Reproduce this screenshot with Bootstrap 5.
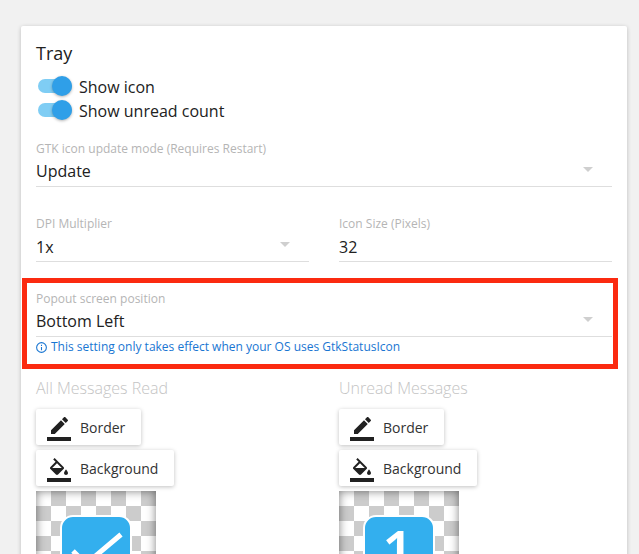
<!DOCTYPE html>
<html lang="en">
<head>
<meta charset="utf-8">
<title>Tray</title>
<link href="https://cdn.jsdelivr.net/npm/bootstrap@5.3.0/dist/css/bootstrap.min.css" rel="stylesheet">
<style>
html,body{height:554px;overflow:hidden}
body{background:#f1f1f1;font-family:"Open Sans","Noto Sans",sans-serif;color:#212121;font-size:16px}
.sheet{margin:26px 12px 0 21px;height:600px;background:#fff;border-radius:2px;box-shadow:0 1px 4px rgba(0,0,0,.22);padding:15px 15px 0}
.sheet-title{font-size:18px;font-weight:400;line-height:24px;margin:0 0 9px}
.tgl-row{height:24px;gap:7px;line-height:24px}
.tgl-text{padding-top:1px}
.tgl{width:34px;height:14px;border-radius:7px;background:#7fcdf4;position:relative;margin-left:2px}
.tgl::after{content:"";position:absolute;right:0;top:-3px;width:20px;height:20px;border-radius:50%;background:#2f9fe8;box-shadow:0 1px 3px rgba(0,0,0,.3)}
.fld{position:relative;height:47px}
.fld-label{font-size:12px;line-height:16px;color:#b5b5b5;display:block;padding-top:1px;height:16px;box-sizing:content-box;margin-bottom:-1px}
.fld-value{font-size:16px;line-height:26px;height:31px;padding-top:2px;border-bottom:1px solid #dedede;display:block}
.fld-value.low{padding-top:3px}
.caret{position:absolute;right:19px;top:27px;width:0;height:0;border-left:5px solid transparent;border-right:5px solid transparent;border-top:5px solid #cfcfcf}
.gap-first{margin-top:18px}
.gap-a{margin-top:28px}
.gap-b{margin-top:22px}
.two{display:grid;grid-template-columns:273px 273px;column-gap:30px}
.flagged{position:relative}
.flagged::after{content:"";position:absolute;left:-14px;right:-6px;top:-12px;height:91px;border:5px solid #fb2a10;pointer-events:none}
.hint{font-size:12px;line-height:16px;color:#1976d2;margin-top:2px;height:16px;gap:3px}
.hint svg{margin-left:-1px}
.hint-ic{width:13px;height:13px}
.sub-head{font-size:16px;font-weight:300;line-height:22px;color:#c4c4c4;margin-bottom:10px}
.tool-btn{height:36px;background:#fff;border:0;border-radius:2px;box-shadow:0 1px 4px rgba(0,0,0,.25);font-size:14px;color:#333;padding:0 16px 0 11px;gap:9px;margin-bottom:5px;width:max-content}
.swatch-ic{width:24px;height:24px;display:block;margin-top:4px}
.checker{width:120px;height:120px;position:relative;background:repeating-conic-gradient(#ccc 0 25%,#fff 0 50%) 0 0/30px 30px;box-shadow:inset 0 0 10px rgba(0,0,0,.5)}
.tile{position:absolute;left:24px;top:24px;width:72px;height:72px;background:#33afee;border:2px solid #fff;border-radius:13px;box-sizing:border-box;color:#fff;overflow:hidden}
.tile-num{font-size:56px;font-weight:600;line-height:60px;text-align:center;display:block;padding-top:2px;margin-left:-2px}
.tile svg{display:block}
</style>
</head>
<body>
<div class="sheet">
  <h2 class="sheet-title">Tray</h2>
  <div class="d-flex align-items-center tgl-row"><span class="tgl"></span><span class="tgl-text">Show icon</span></div>
  <div class="d-flex align-items-center tgl-row"><span class="tgl"></span><span class="tgl-text">Show unread count</span></div>

  <div class="fld gap-first">
    <span class="fld-label">GTK icon update mode (Requires Restart)</span>
    <span class="fld-value">Update</span>
    <span class="caret"></span>
  </div>

  <div class="two gap-a">
    <div class="fld"><span class="fld-label">DPI Multiplier</span><span class="fld-value low">1x</span><span class="caret"></span></div>
    <div class="fld"><span class="fld-label">Icon Size (Pixels)</span><span class="fld-value low">32</span></div>
  </div>

  <div class="flagged gap-a">
    <div class="fld">
      <span class="fld-label">Popout screen position</span>
      <span class="fld-value">Bottom Left</span>
      <span class="caret"></span>
    </div>
    <div class="hint d-flex align-items-center">
      <svg class="hint-ic" viewBox="0 0 24 24" fill="#1976d2" aria-hidden="true"><path d="M11 7h2v2h-2zm0 4h2v6h-2zm1-9a10 10 0 1 0 0 20 10 10 0 0 0 0-20zm0 18a8 8 0 1 1 0-16 8 8 0 0 1 0 16z"/></svg>
      <span>This setting only takes effect when your OS uses GtkStatusIcon</span>
    </div>
  </div>

  <div class="two gap-b">
    <div>
      <div class="sub-head">All Messages Read</div>
      <button class="tool-btn d-flex align-items-center"><svg class="swatch-ic" viewBox="0 0 24 24"><path fill="#212121" d="M17.750 7 14 3.250l-10 10V17h3.750l10-10zm2.960-2.960c.39-.39.39-1.020 0-1.410L18.370.29c-.39-.39-1.020-.39-1.410 0L15 2.250 18.750 6l1.960-1.960z"/><path fill="#212121" d="M0 20h24v4H0z"/></svg><span>Border</span></button>
      <button class="tool-btn d-flex align-items-center"><svg class="swatch-ic" viewBox="0 0 24 24"><path fill="#212121" d="M16.560 8.940 7.620 0 6.210 1.410l2.380 2.380-5.150 5.150c-.59.59-.59 1.540 0 2.120l5.500 5.500c.29.29.68.44 1.060.44s.77-.15 1.060-.44l5.500-5.500c.59-.58.59-1.530 0-2.120zM5.210 10 10 5.210 14.790 10H5.210zM19 11.500s-2 2.170-2 3.500c0 1.100.9 2 2 2s2-.9 2-2c0-1.330-2-3.500-2-3.500z"/><path fill="#212121" d="M0 20h24v4H0z"/></svg><span>Background</span></button>
      <div class="checker"><div class="tile"><svg width="68" height="68" viewBox="0 0 68 68"><path d="M11 34 24 47 59 17.500" fill="none" stroke="#fff" stroke-width="5"/></svg></div></div>
    </div>
    <div>
      <div class="sub-head">Unread Messages</div>
      <button class="tool-btn d-flex align-items-center"><svg class="swatch-ic" viewBox="0 0 24 24"><path fill="#212121" d="M17.750 7 14 3.250l-10 10V17h3.750l10-10zm2.960-2.960c.39-.39.39-1.020 0-1.410L18.370.29c-.39-.39-1.020-.39-1.410 0L15 2.250 18.750 6l1.960-1.960z"/><path fill="#212121" d="M0 20h24v4H0z"/></svg><span>Border</span></button>
      <button class="tool-btn d-flex align-items-center"><svg class="swatch-ic" viewBox="0 0 24 24"><path fill="#212121" d="M16.560 8.940 7.620 0 6.210 1.410l2.380 2.380-5.150 5.150c-.59.59-.59 1.540 0 2.120l5.500 5.500c.29.29.68.44 1.060.44s.77-.15 1.060-.44l5.500-5.500c.59-.58.59-1.530 0-2.120zM5.210 10 10 5.210 14.790 10H5.210zM19 11.500s-2 2.170-2 3.500c0 1.100.9 2 2 2s2-.9 2-2c0-1.330-2-3.500-2-3.500z"/><path fill="#212121" d="M0 20h24v4H0z"/></svg><span>Background</span></button>
      <div class="checker"><div class="tile"><span class="tile-num">1</span></div></div>
    </div>
  </div>
</div>
</body>
</html>
